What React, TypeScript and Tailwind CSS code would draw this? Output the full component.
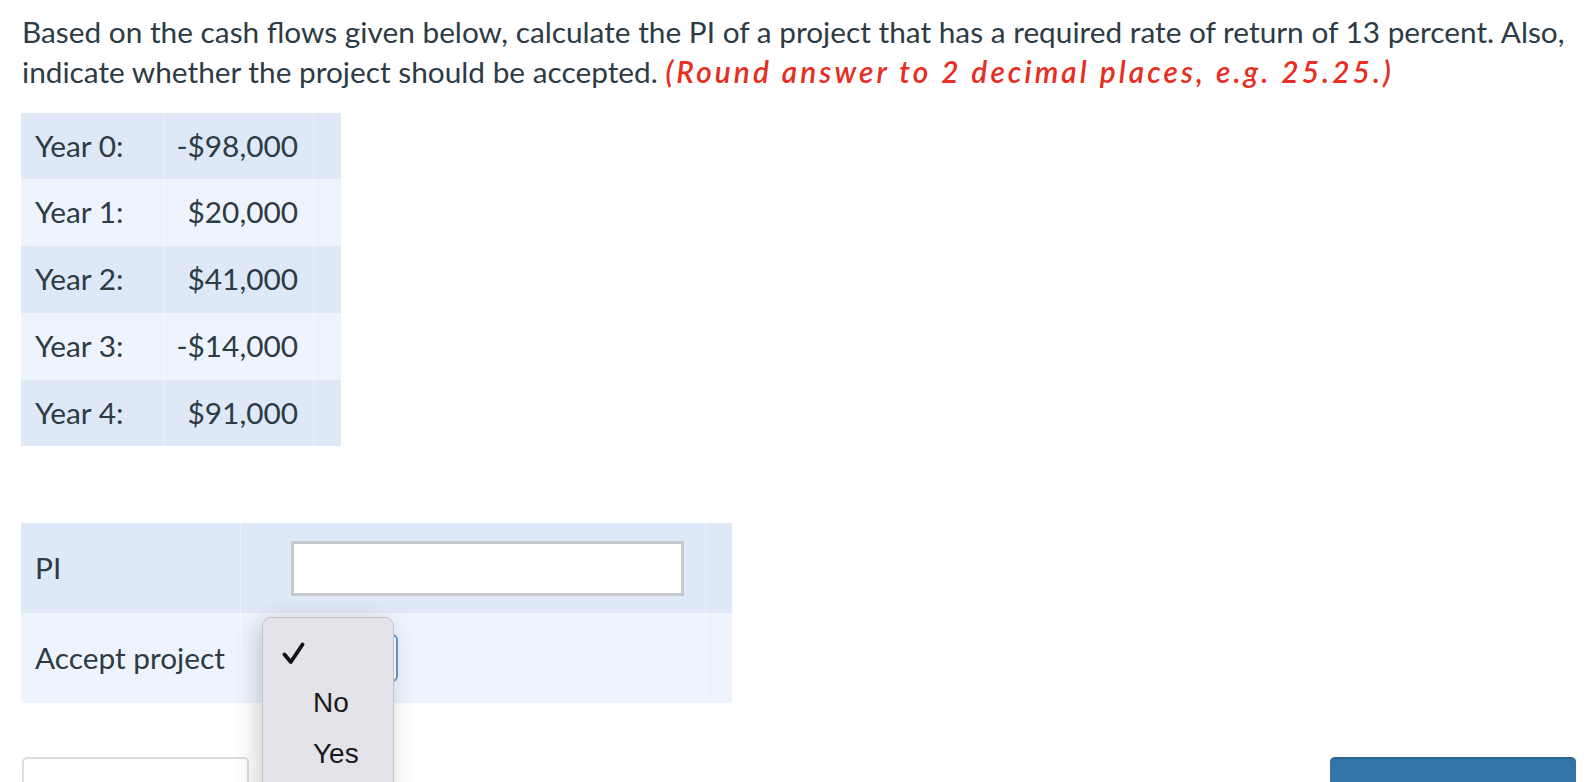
import React from "react";

const rows = [
  ["Year 0:", "-$98,000"],
  ["Year 1:", "$20,000"],
  ["Year 2:", "$41,000"],
  ["Year 3:", "-$14,000"],
  ["Year 4:", "$91,000"],
];

export default function App() {
  return (
    <div
      className="relative h-[782px] w-[1596px] overflow-hidden bg-white text-[#2d3b45]"
      style={{ fontFamily: "Lato, 'Open Sans', sans-serif" }}
    >
      <div className="px-[22px] pt-[12px]">
        <p className="w-[1552px] text-[29.8px] leading-[40px]">
          Based on the cash flows given below, calculate the PI of a project that has a required rate of return of 13 percent. Also, indicate whether the project should be accepted.{" "}
          <span className="font-semibold italic tracking-[3.1px] text-[#e62e22]">
            (Round answer to 2 decimal places, e.g. 25.25.)
          </span>
        </p>

        <div className="mt-[20.5px] ml-[-1px] w-[320px] text-[29.8px]">
          {rows.map(([y, v], i) => (
            <div
              key={y}
              className={`flex h-[66.8px] items-center ${i % 2 === 0 ? "bg-[#dfe8f6]" : "bg-[#eef4fd]"}`}
            >
              <div className="flex h-full w-[142px] items-center pl-[14px]">{y}</div>
              <div className="flex h-full w-[150px] items-center justify-end border-l border-white/40 pr-[15px]">
                {v}
              </div>
              <div className="h-full w-[28px] border-l border-white/40" />
            </div>
          ))}
        </div>

        <div className="mt-[77px] ml-[-1px] w-[711px] text-[29.8px]">
          <div className="flex h-[90px] items-center bg-[#dfe8f6]">
            <div className="flex h-full w-[219px] items-center pl-[14px]">PI</div>
            <div className="flex h-full w-[465px] items-center border-l border-white/40 pl-[50px]">
              <div className="h-[55px] w-[393px] border-[3px] border-[#c9c9c9] bg-white" />
            </div>
            <div className="h-full w-[27px] border-l border-white/40" />
          </div>
          <div className="flex h-[90px] items-center bg-[#eef4fd]">
            <div className="flex h-full w-[219px] items-center pl-[14px]">Accept project</div>
            <div className="flex h-full w-[465px] items-center border-l border-white/40 pl-[28px]">
              <div className="h-[48px] w-[129px] rounded-md border-2 border-[#5e9ed6] bg-white" />
            </div>
            <div className="h-full w-[27px] border-l border-white/40" />
          </div>
        </div>

        <div className="mt-[54px] flex items-start justify-between">
          <div className="h-[40px] w-[227px] rounded-[5px] border-2 border-[#dcdcdc] bg-white" />
          <div className="mr-[-2px] h-[40px] w-[246px] rounded-[5px] border-t-2 border-[#2c6595] bg-[#3674a8]" />
        </div>
      </div>

      {/* native select popup */}
      <div
        className="absolute left-[262px] top-[617px] h-[200px] w-[132px] rounded-[9px] border border-[#c4c3c8] bg-[#e4e3e9] shadow-[-4px_6px_24px_rgba(0,0,0,0.2)]"
        style={{ fontFamily: "'Liberation Sans', Arial, sans-serif" }}
      >
        <svg
          className="absolute left-[19px] top-[24px]"
          width="23"
          height="23"
          viewBox="0 0 23 23"
          fill="none"
        >
          <path d="M2.5 12.5 L8.8 20 L20.5 2.5" stroke="#111" strokeWidth="3.8" strokeLinecap="round" strokeLinejoin="round" />
        </svg>
        <div className="absolute left-[50px] top-[68px] text-[28px] leading-[34px] text-[#1a1a1a]">No</div>
        <div className="absolute left-[50px] top-[119px] text-[28px] leading-[34px] text-[#1a1a1a]">Yes</div>
      </div>
    </div>
  );
}
